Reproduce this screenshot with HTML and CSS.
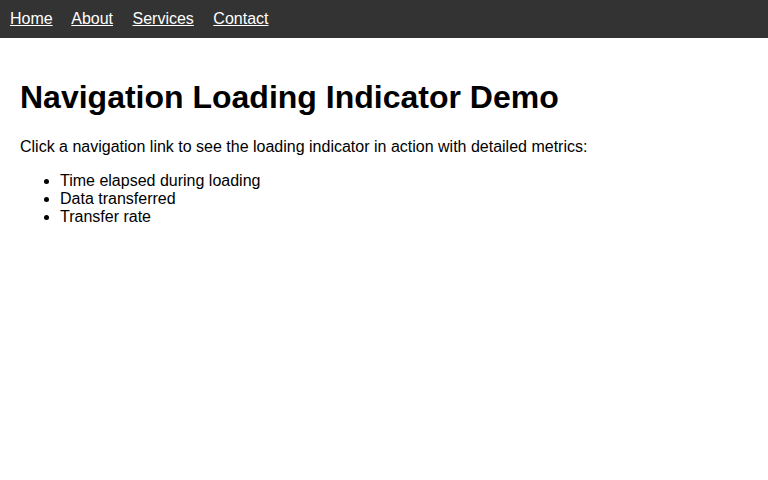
FILE: index.html
```html
<!DOCTYPE html>
<html>
<head>
  <title>Navigation Loading Indicator Demo</title>
  <link rel="stylesheet" href="styles.css">
</head>
<body>
  <nav class="nav">
    <a href="#">Home</a>
    <a href="#">About</a>
    <a href="#">Services</a>
    <a href="#">Contact</a>
  </nav>
  <div class="content">
    <h1>Navigation Loading Indicator Demo</h1>
    <p>Click a navigation link to see the loading indicator in action with detailed metrics:</p>
    <ul>
      <li>Time elapsed during loading</li>
      <li>Data transferred</li>
      <li>Transfer rate</li>
    </ul>
  </div>
</body>
</html>
```

FILE: styles.css
```css
body {
  margin: 0;
  font-family: "Liberation Sans", Arial, sans-serif;
  color: #000;
  background: #fff;
}
.nav {
  background: #333;
  padding: 10px;
}
.nav a {
  color: #fff;
  margin-right: 15px;
}
.content {
  padding: 20px;
}
```
